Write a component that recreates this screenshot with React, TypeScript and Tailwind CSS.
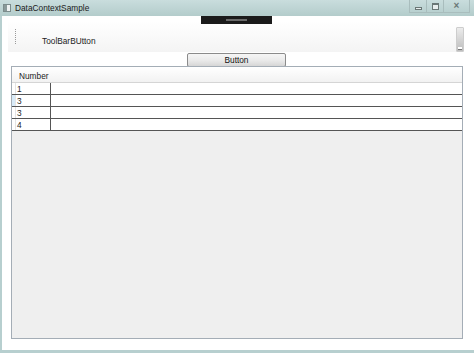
import React from "react";

export default function App() {
  const rows = ["1", "3", "3", "4"];
  return (
    <div
      className="relative w-[474px] h-[353px] overflow-hidden bg-[#b7cfcf] flex flex-col"
      style={{ fontFamily: '"Liberation Sans", Arial, sans-serif' }}
    >
      {/* Title bar */}
      <div className="h-[16px] flex items-center bg-gradient-to-b from-[#c9dddd] to-[#b3cccb] relative">
        <div className="ml-[3px] w-[8px] h-[8px] border border-[#7c8c8c] bg-[#eef2f2] flex">
          <div className="w-[3px] h-full bg-[#8a9a9a]" />
        </div>
        <span className="ml-[4px] text-[8.3px] text-[#1a1a1a] leading-none">DataContextSample</span>
        <div className="ml-auto mr-[4px] flex items-start self-start h-[14px]">
          <div className="w-[17px] h-[13px] border-l border-b border-[#a9bdbd] flex items-center justify-center">
            <div className="w-[7px] h-[3px] border border-[#6a7776] bg-[#e8eeee] mt-[4px]" />
          </div>
          <div className="w-[17px] h-[13px] border-l border-b border-[#a9bdbd] flex items-center justify-center">
            <div className="w-[7px] h-[7px] border border-[#6a7776] bg-[#e8eeee] border-t-2" />
          </div>
          <div className="w-[27px] h-[13px] border-l border-r border-b border-[#a9bdbd] flex items-center justify-center text-[10px] text-[#6a7776] leading-none font-bold">
            ×
          </div>
        </div>
      </div>

      {/* Client area */}
      <div className="flex-1 ml-[2px] mb-[3px] bg-white flex flex-col">
        {/* Toolbar */}
        <div className="mt-[5px] ml-[6px] mr-[10px] h-[31px] flex items-center bg-gradient-to-b from-white to-[#f4f4f4]">
          <div className="ml-[7px] flex flex-col gap-[1px] h-[18px] justify-center">
            {[0, 1, 2, 3, 4, 5, 6, 7].map((i) => (
              <div key={i} className="w-[1px] h-[1px] bg-[#9a9a9a]" />
            ))}
          </div>
          <span className="ml-[26px] mt-[9px] text-[8.3px] text-[#222] leading-none">ToolBarBUtton</span>
          <div className="ml-auto self-end w-[8px] h-[25px] rounded-[1px] bg-gradient-to-b from-[#ececec] to-[#bdbdbd] border border-[#cdcdcd] flex flex-col justify-end items-center">
            <div className="w-[4px] h-[3px] bg-white mb-[1px] border-b border-[#777]" />
          </div>
        </div>

        {/* Button */}
        <div className="flex justify-center mt-[1px]">
          <div className="ml-[-3px] w-[99px] h-[14px] rounded-[2px] border border-[#8b8b8b] bg-gradient-to-b from-[#f6f6f6] via-[#ebebeb] to-[#d6d6d6] flex items-center justify-center text-[8.3px] text-[#111] leading-none">
            Button
          </div>
        </div>

        {/* DataGrid */}
        <div className="mt-[-1px] ml-[9px] mr-[11px] h-[273px] border border-[#a4adb6] bg-[#efefef] flex flex-col">
          <div className="h-[16px] flex items-center pt-[3px] bg-gradient-to-b from-white to-[#f2f2f2] border-b border-[#d5d5d5]">
            <span className="ml-[7px] text-[8.3px] text-[#222] leading-none">Number</span>
          </div>
          {rows.map((r, i) => (
            <div key={i} className="h-[12px] flex bg-white border-b border-[#555]">
              <div className={`w-[4px] h-full ${i === 1 ? "bg-[#d8eaf7]" : "bg-white"} border-r border-[#e4e4e4]`} />
              <div className="w-[35px] h-full border-r border-[#555] flex items-center pl-[1px] pt-[1px] text-[8.3px] text-[#222] leading-none">
                {r}
              </div>
              <div className="flex-1" />
            </div>
          ))}
        </div>
      </div>

      {/* Debug adorner bar */}
      <div className="absolute left-[201px] top-[16px] w-[71px] h-[8px] bg-[#1b1b1b] flex items-center justify-center">
        <div className="w-[21px] h-[2px] bg-[#6a6a6a]" />
      </div>
    </div>
  );
}
